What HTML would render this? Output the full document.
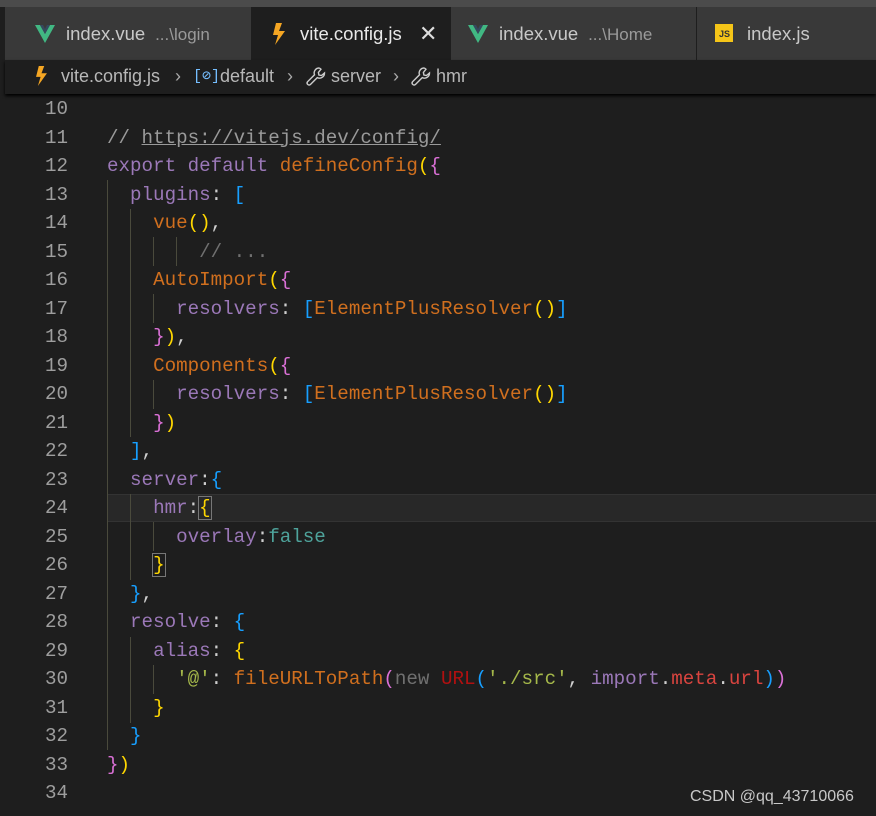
<!DOCTYPE html>
<html><head><meta charset="utf-8"><style>
*{margin:0;padding:0;box-sizing:border-box}
body{width:876px;height:816px;background:#1e1e1e;position:relative;overflow:hidden;font-family:"Liberation Sans",sans-serif}
.top{position:absolute;left:0;top:0;width:876px;height:7px;background:#4b4b4b}
.lstrip{position:absolute;left:0;top:0;width:5px;height:816px;background:#333}
.tab{position:absolute;top:7px;height:53px;background:#393939;color:#c8c8c8;font-size:18.5px;line-height:53px}
.tab .d{color:#9a9a9a;font-size:17px}
.crumb{position:absolute;left:5px;top:60px;width:871px;height:34px;background:#1e1e1e;color:#b8b8b8;font-size:18px;line-height:33px;box-shadow:0 2px 3px #000}
.ln{position:absolute;left:20px;width:48px;text-align:right;color:#9e9e9e;font-family:"Liberation Mono",monospace;font-size:19.2px;line-height:28.5px}
.cl{position:absolute;left:107px;font-family:"Liberation Mono",monospace;font-size:19.2px;line-height:28.5px;white-space:pre;color:#d4d4d4}
.g{position:absolute;width:1px;background:#4a4a3c}
.k{color:#9b78b8}.f{color:#d06f1e}.p{color:#da70d6}.y{color:#ffd700}.b{color:#179fff}.c{color:#9a9a9a}.t{color:#4ea39b}.s{color:#a5b84a}.n{color:#707070}.u{color:#b01010}.r{color:#d9443f}.w{color:#cfcfcf}
</style></head><body>
<div class="top"></div>
<div class="tab" style="left:5px;width:246px">
<svg style="position:absolute;left:30px;top:17px" width="20" height="20" viewBox="0 0 20 20"><path d="M0 1h5l5 9 5-9h5L10 19z" fill="#41b883"/><path d="M5 1h3l2 4 2-4h3L10 10z" fill="#35495e"/></svg>
<span style="position:absolute;left:61px">index.vue <span class="d">&nbsp;...\login</span></span></div>
<div class="tab" style="left:252px;width:198px;background:#1e1e1e;color:#e8e8e8">
<svg style="position:absolute;left:20px;top:16px" width="14" height="22" viewBox="0 0 14 22"><path d="M4 0h6L7 8h6L3 22l3-10H1z" fill="#f5a623"/></svg>
<span style="position:absolute;left:48px">vite.config.js</span>
<span style="position:absolute;left:167px;font-size:22px;color:#ddd">✕</span></div>
<div class="tab" style="left:451px;width:245px">
<svg style="position:absolute;left:17px;top:17px" width="20" height="20" viewBox="0 0 20 20"><path d="M0 1h5l5 9 5-9h5L10 19z" fill="#41b883"/><path d="M5 1h3l2 4 2-4h3L10 10z" fill="#35495e"/></svg>
<span style="position:absolute;left:48px">index.vue <span class="d">&nbsp;...\Home</span></span></div>
<div class="tab" style="left:697px;width:179px">
<div style="position:absolute;left:18px;top:17px;width:18px;height:18px;background:#f5c518"><span style="position:absolute;left:4px;top:5px;font-size:9px;line-height:10px;color:#333;font-weight:bold">JS</span></div>
<span style="position:absolute;left:50px">index.js</span></div>
<div class="crumb">
<svg style="position:absolute;left:30px;top:6px" width="13" height="20" viewBox="0 0 14 22"><path d="M4 0h6L7 8h6L3 22l3-10H1z" fill="#f5a623"/></svg>
<span style="position:absolute;left:56px">vite.config.js</span>
<span style="position:absolute;left:170px;color:#aaa">›</span>
<span style="position:absolute;left:188px;color:#75beff;font-size:15px;font-family:'Liberation Mono',monospace">[⊘]</span>
<span style="position:absolute;left:215px">default</span>
<span style="position:absolute;left:282px;color:#aaa">›</span>
<svg style="position:absolute;left:300px;top:6px" width="22" height="22" viewBox="0 0 22 22"><path d="M14 2a5 5 0 0 0-4.5 6.8L2.5 15.8a2 2 0 0 0 2.8 2.8l7-7A5 5 0 0 0 19.5 7l-3 2.5-2.6-.5-.5-2.6L16 3.2A5 5 0 0 0 14 2z" fill="none" stroke="#ccc" stroke-width="1.4"/></svg>
<span style="position:absolute;left:326px">server</span>
<span style="position:absolute;left:388px;color:#aaa">›</span>
<svg style="position:absolute;left:405px;top:6px" width="22" height="22" viewBox="0 0 22 22"><path d="M14 2a5 5 0 0 0-4.5 6.8L2.5 15.8a2 2 0 0 0 2.8 2.8l7-7A5 5 0 0 0 19.5 7l-3 2.5-2.6-.5-.5-2.6L16 3.2A5 5 0 0 0 14 2z" fill="none" stroke="#ccc" stroke-width="1.4"/></svg>
<span style="position:absolute;left:431px">hmr</span>
</div>
<div style="position:absolute;left:107px;top:494px;width:769px;height:28px;background:#282828;border-top:1px solid #333;border-bottom:1px solid #333"></div>
<div class="g" style="left:107px;top:180px;height:570px"></div>
<div class="g" style="left:130px;top:209px;height:228px"></div>
<div class="g" style="left:130px;top:494px;height:86px"></div>
<div class="g" style="left:130px;top:637px;height:86px"></div>
<div class="g" style="left:153px;top:237px;height:29px"></div>
<div class="g" style="left:176px;top:237px;height:29px"></div>
<div class="g" style="left:153px;top:294px;height:29px"></div>
<div class="g" style="left:153px;top:380px;height:29px"></div>
<div class="g" style="left:153px;top:522px;height:29px"></div>
<div class="g" style="left:153px;top:665px;height:29px"></div>
<div class="ln" style="top:95px">10<br>11<br>12<br>13<br>14<br>15<br>16<br>17<br>18<br>19<br>20<br>21<br>22<br>23<br>24<br>25<br>26<br>27<br>28<br>29<br>30<br>31<br>32<br>33<br>34</div>
<div class="cl" style="top:95px">
<span class="c">// <span style="text-decoration:underline">https://vitejs.dev/config/</span></span>
<span class="k">export default</span> <span class="f">defineConfig</span><span class="y">(</span><span class="p">{</span>
  <span class="k">plugins</span><span class="w">:</span> <span class="b">[</span>
    <span class="f">vue</span><span class="y">()</span><span class="w">,</span>
        <span class="n">// ...</span>
    <span class="f">AutoImport</span><span class="y">(</span><span class="p">{</span>
      <span class="k">resolvers</span><span class="w">:</span> <span class="b">[</span><span class="f">ElementPlusResolver</span><span class="y">()</span><span class="b">]</span>
    <span class="p">}</span><span class="y">)</span><span class="w">,</span>
    <span class="f">Components</span><span class="y">(</span><span class="p">{</span>
      <span class="k">resolvers</span><span class="w">:</span> <span class="b">[</span><span class="f">ElementPlusResolver</span><span class="y">()</span><span class="b">]</span>
    <span class="p">}</span><span class="y">)</span>
  <span class="b">]</span><span class="w">,</span>
  <span class="k">server</span><span class="w">:</span><span class="b">{</span>
    <span class="k">hmr</span><span class="w">:</span><span class="y" style="outline:1px solid #777">{</span>
      <span class="k">overlay</span><span class="w">:</span><span class="t">false</span>
    <span class="y" style="outline:1px solid #777">}</span>
  <span class="b">}</span><span class="w">,</span>
  <span class="k">resolve</span><span class="w">:</span> <span class="b">{</span>
    <span class="k">alias</span><span class="w">:</span> <span class="y">{</span>
      <span class="s">'@'</span><span class="w">:</span> <span class="f">fileURLToPath</span><span class="p">(</span><span class="n">new</span> <span class="u">URL</span><span class="b">(</span><span class="s">'./src'</span><span class="w">,</span> <span class="k">import</span><span class="w">.</span><span class="r">meta</span><span class="w">.</span><span class="r">url</span><span class="b">)</span><span class="p">)</span>
    <span class="y">}</span>
  <span class="b">}</span>
<span class="p">}</span><span class="y">)</span>
</div>
<div style="position:absolute;left:690px;top:788px;color:#c8c8c8;font-size:16px">CSDN @qq_43710066</div>
</body></html>
